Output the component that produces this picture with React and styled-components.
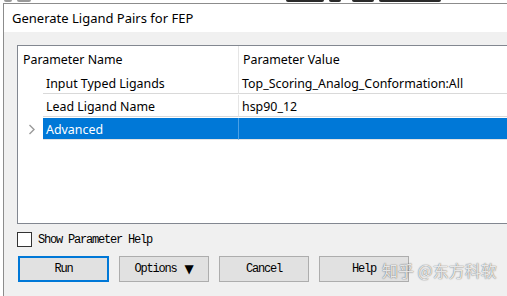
import React, { useState } from 'react';
import styled, { createGlobalStyle } from 'styled-components';

const GlobalStyle = createGlobalStyle`
  html, body {
    margin: 0;
    padding: 0;
    background: #fff;
    overflow: hidden;
  }
`;

const uiFont = `"Noto Sans", "Noto Sans CJK SC", sans-serif`;
const monoFont = `"Liberation Mono", "Noto Sans CJK SC", monospace`;

const Screen = styled.div`
  position: relative;
  width: 507px;
  height: 296px;
  overflow: hidden;
  background: #fff;
  font-family: ${uiFont};
`;

// sliver of the window behind the dialog
const Backdrop = styled.div`
  height: 3px;
  display: flex;
  align-items: flex-start;
  gap: 5px;
  padding-left: 4px;
`;

const Blob = styled.span`
  display: block;
  width: ${p => p.w}px;
  height: 2px;
  margin-left: ${p => p.skip || 0}px;
  background: ${p => p.tone || '#2a2a2a'};
  border-radius: 0 0 2px 2px;
`;

const Dialog = styled.div`
  margin-left: 3px;
  width: 620px;
  height: 293px;
  border-left: 1px solid #8c8c8c;
  border-top: 1px solid #8c8c8c;
  display: flex;
  flex-direction: column;
`;

const TitleBar = styled.div`
  height: 28px;
  background: #fff;
  display: flex;
  align-items: center;
  padding-left: 8px;
  font-size: 13px;
  color: #000;
`;

const Body = styled.div`
  flex: 1;
  background: #f0f0f0;
  padding: 13px 0 0 13px;
  display: flex;
  flex-direction: column;
`;

const Tree = styled.div`
  height: 177px;
  background: #fff;
  border: 1px solid #828790;
  border-right: none;
  font-size: 12.4px;
  color: #000;
`;

const HeaderRow = styled.div`
  display: grid;
  grid-template-columns: 220px 1fr;
  height: 26px;
`;

const HeaderCell = styled.div`
  display: flex;
  align-items: center;
  padding: 1px 0 0 ${p => (p.first ? 5 : 4)}px;
  border-left: ${p => (p.first ? 'none' : '1px solid #e5e5e5')};
`;

const Row = styled.div`
  display: grid;
  grid-template-columns: 25px 195px 1fr;
  height: 22px;
  margin-top: ${p => (p.first ? 0 : 1)}px;
`;

const Branch = styled.div`
  display: flex;
  align-items: center;
  justify-content: center;
  padding-left: 2px;
`;

const Cell = styled.div`
  display: flex;
  align-items: center;
  padding: 2px 0 0 3px;
  box-sizing: border-box;
  border-bottom: 1px solid ${p => (p.selected ? '#e3e3e3' : '#d9d9d9')};
  border-left: ${p => (p.divider ? `1px solid ${p.selected ? '#4aa0e6' : '#e5e5e5'}` : 'none')};
  background: ${p => (p.selected ? '#0078d7' : '#fff')};
  color: ${p => (p.selected ? '#fff' : '#000')};
  white-space: nowrap;
`;

const Footer = styled.div`
  display: flex;
  flex-direction: column;
`;

const CheckRow = styled.label`
  display: flex;
  align-items: center;
  gap: 6px;
  margin-top: 8px;
  height: 15px;
  font-family: ${monoFont};
  font-size: 12px;
  letter-spacing: -1.2px;
  color: #000;
`;

const Box = styled.span`
  width: 13px;
  height: 13px;
  background: #fff;
  border: 1px solid #333;
  display: inline-block;
`;

const Buttons = styled.div`
  display: flex;
  gap: 10px;
  margin-top: 9px;
  padding-left: 1px;
`;

const Button = styled.button`
  width: ${p => (p.primary ? 91 : 90)}px;
  height: 26px;
  box-sizing: border-box;
  background: #e1e1e1;
  border: ${p => (p.primary ? '2px solid #0078d7' : '1px solid #adadad')};
  font-family: ${monoFont};
  font-size: 12px;
  letter-spacing: -1.2px;
  color: #000;
  padding: 0;
  display: flex;
  align-items: center;
  justify-content: center;
  gap: 8px;
`;

const Caret = styled.span`
  font-family: "DejaVu Sans", sans-serif;
  font-size: 12px;
  letter-spacing: 0;
`;

const Watermark = styled.div`
  position: absolute;
  left: 382px;
  top: 258px;
  font-family: "Noto Sans CJK SC", sans-serif;
  font-size: 16px;
  color: rgba(255, 255, 255, 0.85);
  text-shadow: 0 0 1px rgba(0, 0, 0, 0.6), 0 0 2px rgba(0, 0, 0, 0.2);
  white-space: nowrap;
  pointer-events: none;
`;

const Chevron = () => (
  <svg width="8" height="11" viewBox="0 0 8 11">
    <path d="M1.5 1 L6 5.5 L1.5 10" fill="none" stroke="#9a9a9a" strokeWidth="1.4" />
  </svg>
);

const params = [
  { name: 'Input Typed Ligands', value: 'Top_Scoring_Analog_Conformation:All' },
  { name: 'Lead Ligand Name', value: 'hsp90_12' },
  { name: 'Advanced', value: '', group: true, selected: true },
];

const App = () => {
  const [showHelp, setShowHelp] = useState(false);

  return (
    <Screen>
      <GlobalStyle />
      <Backdrop>
        <Blob w={8} tone="#999" />
        <Blob w={14} tone="#999" />
        <Blob w={38} skip={250} />
        <Blob w={12} />
        <Blob w={22} skip={6} />
        <Blob w={62} />
      </Backdrop>
      <Dialog>
        <TitleBar>Generate Ligand Pairs for FEP</TitleBar>
        <Body>
          <Tree>
            <HeaderRow>
              <HeaderCell first>Parameter Name</HeaderCell>
              <HeaderCell>Parameter Value</HeaderCell>
            </HeaderRow>
            {params.map((p, i) => (
              <Row key={p.name} first={i === 0}>
                <Branch>{p.group && <Chevron />}</Branch>
                <Cell selected={p.selected}>{p.name}</Cell>
                <Cell selected={p.selected} divider>
                  {p.value}
                </Cell>
              </Row>
            ))}
          </Tree>
          <Footer>
            <CheckRow onClick={() => setShowHelp(!showHelp)}>
              <Box />
              Show Parameter Help
            </CheckRow>
            <Buttons>
              <Button primary>Run</Button>
              <Button>
                Options <Caret>▼</Caret>
              </Button>
              <Button>Cancel</Button>
              <Button>Help</Button>
            </Buttons>
          </Footer>
        </Body>
      </Dialog>
      <Watermark>知乎 @东方科软</Watermark>
    </Screen>
  );
};

export default App;
